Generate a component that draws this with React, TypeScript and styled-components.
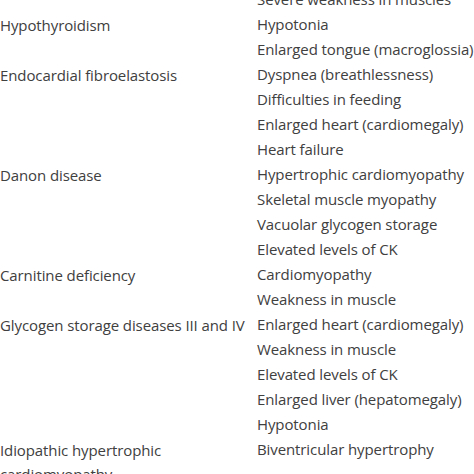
import { Fragment } from "react";
import styled, { createGlobalStyle } from "styled-components";

const GlobalStyle = createGlobalStyle`
  html, body {
    margin: 0;
    padding: 0;
    background: #ffffff;
    overflow: hidden;
  }
  body {
    font-family: "Open Sans", "Liberation Sans", sans-serif;
    color: #404040;
  }
`;

const Page = styled.div`
  width: 474px;
  height: 474px;
  overflow: hidden;
`;

const Table = styled.div`
  display: grid;
  grid-template-columns: 257px 1fr;
  margin-top: -13px;
  font-size: 15px;
  line-height: 25px;
  letter-spacing: -0.1px;
  white-space: nowrap;
`;

const Condition = styled.div`
  white-space: normal;
  line-height: 24px;
  padding-top: 1px;
  padding-right: 2px;
`;

const Symptoms = styled.ul`
  list-style: none;
  margin: 0;
  padding: 0;
`;

const Symptom = styled.li`
  height: 25px;
`;

interface IRow {
  condition: string;
  symptoms: string[];
}

const rows: IRow[] = [
  { condition: "", symptoms: ["Severe weakness in muscles"] },
  {
    condition: "Hypothyroidism",
    symptoms: ["Hypotonia", "Enlarged tongue (macroglossia)"],
  },
  {
    condition: "Endocardial fibroelastosis",
    symptoms: [
      "Dyspnea (breathlessness)",
      "Difficulties in feeding",
      "Enlarged heart (cardiomegaly)",
      "Heart failure",
    ],
  },
  {
    condition: "Danon disease",
    symptoms: [
      "Hypertrophic cardiomyopathy",
      "Skeletal muscle myopathy",
      "Vacuolar glycogen storage",
      "Elevated levels of CK",
    ],
  },
  {
    condition: "Carnitine deficiency",
    symptoms: ["Cardiomyopathy", "Weakness in muscle"],
  },
  {
    condition: "Glycogen storage diseases III and IV",
    symptoms: [
      "Enlarged heart (cardiomegaly)",
      "Weakness in muscle",
      "Elevated levels of CK",
      "Enlarged liver (hepatomegaly)",
      "Hypotonia",
    ],
  },
  {
    condition: "Idiopathic hypertrophic cardiomyopathy",
    symptoms: ["Biventricular hypertrophy"],
  },
];

const App = () => {
  return (
    <>
      <GlobalStyle />
      <Page>
        <Table>
          {rows.map((row, i) => (
            <Fragment key={i}>
              <Condition>{row.condition}</Condition>
              <Symptoms>
                {row.symptoms.map((s, j) => (
                  <Symptom key={j}>{s}</Symptom>
                ))}
              </Symptoms>
            </Fragment>
          ))}
        </Table>
      </Page>
    </>
  );
};

export default App;
